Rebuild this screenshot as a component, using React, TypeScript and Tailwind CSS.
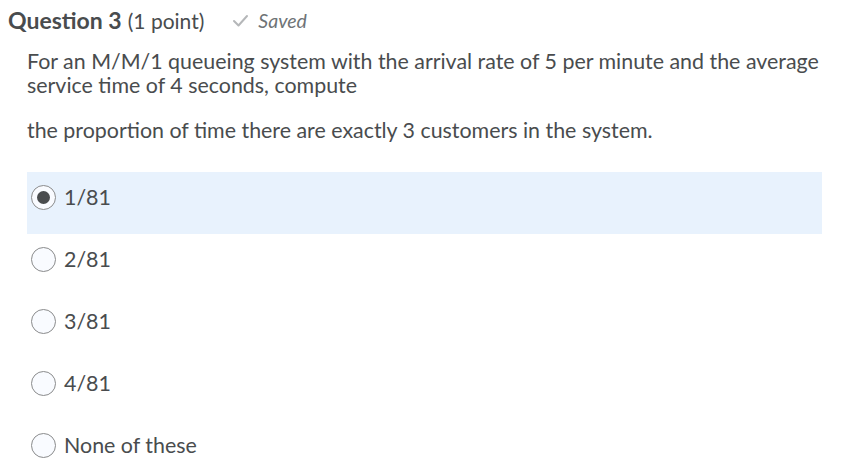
import React from "react";

const options = ["1/81", "2/81", "3/81", "4/81", "None of these"];

function Radio({ checked }: { checked: boolean }) {
  return (
    <span className="flex h-[25px] w-[25px] shrink-0 items-center justify-center rounded-full border-[1.5px] border-[#8a8b8c] bg-[#f9fbff]">
      {checked && <span className="h-[13px] w-[13px] rounded-full bg-[#494c4e]" />}
    </span>
  );
}

export default function App() {
  return (
    <div className="min-h-[471px] w-[842px] bg-white font-['Lato','Noto_Sans',sans-serif] text-[#494c4e]">
      <div className="flex items-baseline pl-[8px] pt-[6px]">
        <span className="text-[23px] font-bold leading-[28px]">Question 3</span>
        <span className="ml-[6px] text-[21px] leading-[28px]">(1 point)</span>
        <span className="ml-[28px] flex items-center self-center">
          <svg width="17" height="15" viewBox="0 0 17 15" className="mr-[9px]">
            <path d="M2 8 L6.5 12.5 L15 3" fill="none" stroke="#b5b7b9" strokeWidth="2" strokeLinecap="round" strokeLinejoin="round" />
          </svg>
          <span className="text-[19.5px] italic text-[#6e7376]">Saved</span>
        </span>
      </div>
      <div className="pl-[27px] pr-[10px] pt-[14px]">
        <p className="text-[21.4px] leading-[24px]">
          For an M/M/1 queueing system with the arrival rate of 5 per minute and the average service time of 4 seconds, compute
        </p>
        <p className="mt-[21px] text-[21.4px] leading-[24px]">
          the proportion of time there are exactly 3 customers in the system.
        </p>
        <div className="mt-[30px] w-[795px]">
          {options.map((o, i) => (
            <div
              key={o}
              className={`flex h-[62px] items-start pl-[4px] pt-[13px] ${i === 0 ? "bg-[#e8f2fd]" : ""}`}
            >
              <Radio checked={i === 0} />
              <span className="ml-[8px] text-[21.4px] leading-[25px]">{o}</span>
            </div>
          ))}
        </div>
      </div>
    </div>
  );
}
